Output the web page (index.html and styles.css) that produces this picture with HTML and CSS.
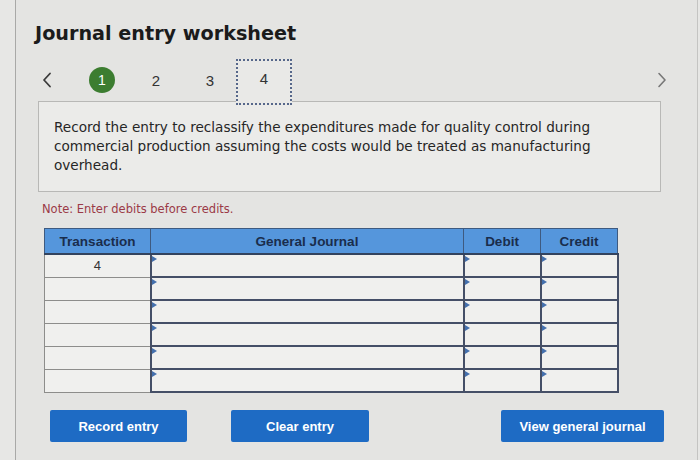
FILE: index.html
```html
<!DOCTYPE html>
<html lang="en">
<head>
<meta charset="utf-8">
<title>Journal entry worksheet</title>
<link rel="stylesheet" href="styles.css">
</head>
<body>
<div class="page">
  <h1 class="title">Journal entry worksheet</h1>
  <div class="nav">
    <span class="arrow prev"><svg width="10" height="16" viewBox="0 0 10 16"><polyline points="8,1.5 2,8 8,14.5" fill="none" stroke="#3a3a3a" stroke-width="1.8" stroke-linecap="round" stroke-linejoin="round"/></svg></span>
    <div class="steps">
      <span class="step"><span class="dot">1</span></span>
      <span class="step">2</span>
      <span class="step">3</span>
      <span class="step current">4</span>
    </div>
    <span class="arrow next"><svg width="10" height="16" viewBox="0 0 10 16"><polyline points="2,1.5 8,8 2,14.5" fill="none" stroke="#777" stroke-width="1.6" stroke-linecap="round" stroke-linejoin="round"/></svg></span>
  </div>
  <div class="prompt">Record the entry to reclassify the expenditures made for quality control during commercial production assuming the costs would be treated as manufacturing overhead.</div>
  <p class="note">Note: Enter debits before credits.</p>
  <table class="journal">
    <colgroup><col class="c-tr"><col class="c-gj"><col class="c-amt"><col class="c-amt"></colgroup>
    <thead>
      <tr><th>Transaction</th><th>General Journal</th><th>Debit</th><th>Credit</th></tr>
    </thead>
    <tbody>
      <tr><td class="tr">4</td><td class="in"></td><td class="in"></td><td class="in"></td></tr>
      <tr><td class="tr"></td><td class="in"></td><td class="in"></td><td class="in"></td></tr>
      <tr><td class="tr"></td><td class="in"></td><td class="in"></td><td class="in"></td></tr>
      <tr><td class="tr"></td><td class="in"></td><td class="in"></td><td class="in"></td></tr>
      <tr><td class="tr"></td><td class="in"></td><td class="in"></td><td class="in"></td></tr>
      <tr><td class="tr"></td><td class="in"></td><td class="in"></td><td class="in"></td></tr>
    </tbody>
  </table>
  <div class="actions">
    <button class="btn record">Record entry</button>
    <button class="btn clear">Clear entry</button>
    <button class="btn view">View general journal</button>
  </div>
</div>
</body>
</html>
```
FILE: styles.css
```css
html, body {
  margin: 0;
  padding: 0;
  background: #e7e7e5;
}
body {
  font-family: "DejaVu Sans", Verdana, sans-serif;
  color: #222;
}
.page {
  margin-left: 15px;
  height: 460px;
  box-sizing: border-box;
  width: 683px;
  padding: 22px 36px 0 22px;
  border-left: 1px solid #a9a9a7;
  border-right: 1px solid #c4c4c2;
  background: #e4e4e2;
}
.title {
  margin: 0 0 0 -3px;
  font-family: "DejaVu Sans", Verdana, sans-serif;
  font-weight: bold;
  font-size: 19.2px;
  line-height: 24px;
  color: #1b1b1b;
}
.nav {
  display: flex;
  align-items: center;
  height: 42px;
  margin-top: 13px;
}
.arrow {
  display: flex;
  align-items: center;
  height: 42px;
}
.arrow.prev {
  width: 37px;
  padding-left: 4px;
  box-sizing: border-box;
}
.arrow.next {
  margin-left: auto;
  margin-right: -6px;
}
.steps {
  display: flex;
  align-items: center;
}
.step {
  width: 54px;
  height: 42px;
  display: flex;
  align-items: center;
  justify-content: center;
  font-family: "Liberation Sans", Arial, sans-serif;
  font-size: 15px;
  color: #333;
}
.step.current {
  box-sizing: border-box;
  height: 46px;
  margin-top: 4px;
  margin-left: -1px;
  width: 56px;
  padding-bottom: 7px;
  border: 2px dotted #56678a;
  background: #e9e9e7;
  position: relative;
  z-index: 1;
}
.dot {
  width: 26px;
  height: 26px;
  border-radius: 50%;
  background: #3c7d30;
  color: #fff;
  display: flex;
  align-items: center;
  justify-content: center;
  font-size: 14px;
}
.prompt {
  border: 1px solid #b8b8b6;
  background: #ebebe9;
  padding: 16px 40px 16px 15px;
  font-size: 13.6px;
  line-height: 19px;
  color: #262626;
}
.note {
  margin: 10px 0 0 4px;
  font-size: 11.5px;
  line-height: 14px;
  color: #9b3a47;
}
.journal {
  margin: 12px 0 0 6px;
  border-collapse: collapse;
  table-layout: fixed;
  width: 573px;
  font-family: "Liberation Sans", Arial, sans-serif;
}
.c-tr { width: 106px; }
.c-gj { width: 313px; }
.c-amt { width: 77px; }
.journal th {
  height: 24px;
  padding: 0;
  background: #5596dc;
  color: #1a2d4c;
  font-size: 13.5px;
  font-weight: bold;
  text-align: center;
  border: 1px solid #3e5a80;
  border-bottom: 2px solid #33435e;
}
.journal td {
  height: 23px;
  padding: 0;
  box-sizing: border-box;
  background: #f0f0ee;
}
.journal td.tr {
  border: 1px solid #8d8d8b;
  text-align: center;
  font-size: 13px;
  color: #333;
  vertical-align: middle;
}
.journal td.in {
  border: 2px solid #454f67;
  position: relative;
}
.journal td.in::before {
  content: "";
  position: absolute;
  left: 0;
  top: 1px;
  border-left: 5px solid #4470ad;
  border-top: 3px solid transparent;
  border-bottom: 3px solid transparent;
}
.actions {
  display: flex;
  margin-top: 17px;
  padding-left: 12px;
}
.btn {
  height: 32px;
  border: none;
  border-radius: 2px;
  background: #1e6bc4;
  color: #fff;
  font-family: "Liberation Sans", Arial, sans-serif;
  font-weight: bold;
  font-size: 13px;
  padding: 0;
}
.btn.record { width: 137px; }
.btn.clear { width: 138px; margin-left: 44px; }
.btn.view { width: 163px; margin-left: auto; margin-right: -3px; }
```
